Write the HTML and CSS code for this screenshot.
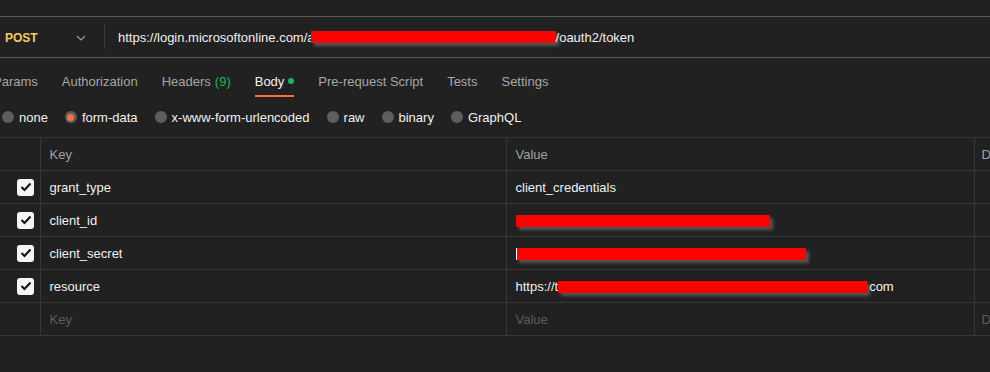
FILE: index.html
```html
<!DOCTYPE html>
<html lang="en">
<head>
<meta charset="UTF-8" />
<title>POST token request</title>
<link rel="stylesheet" href="styles.css">
</head>
<body>

<div class="top-strip"></div>

<div class="url-bar">
  <div class="method">
    <span class="method-name">POST</span>
    <svg class="chevron" width="10" height="6" viewBox="0 0 10 6"><polyline points="1,1 5,5 9,1" fill="none" stroke="#9a9a9a" stroke-width="1.2"/></svg>
  </div>
  <div class="divider"></div>
  <div class="url">https://login.microsoftonline.com/a<span class="redact redact-url"></span>/oauth2/token</div>
</div>

<div class="tabs">
  <div class="tab tab-params">Params</div>
  <div class="tab">Authorization</div>
  <div class="tab">Headers <span class="count">(9)</span></div>
  <div class="tab active">Body <span class="dot"></span></div>
  <div class="tab">Pre-request Script</div>
  <div class="tab">Tests</div>
  <div class="tab">Settings</div>
</div>

<div class="body-types">
  <label class="radio"><span class="circle"></span>none</label>
  <label class="radio"><span class="circle checked"></span>form-data</label>
  <label class="radio"><span class="circle"></span>x-www-form-urlencoded</label>
  <label class="radio"><span class="circle"></span>raw</label>
  <label class="radio"><span class="circle"></span>binary</label>
  <label class="radio"><span class="circle"></span>GraphQL</label>
</div>

<table class="kv">
  <colgroup>
    <col class="c-check"><col class="c-key"><col class="c-value"><col class="c-desc">
  </colgroup>
  <tr class="head">
    <td></td><td>Key</td><td>Value</td><td>D</td>
  </tr>
  <tr>
    <td><span class="checkbox"><svg width="12" height="10" viewBox="0 0 12 10"><polyline points="1.5,5 4.5,8 10.5,1.5" fill="none" stroke="#111" stroke-width="2"/></svg></span></td>
    <td>grant_type</td><td>client_credentials</td><td></td>
  </tr>
  <tr>
    <td><span class="checkbox"><svg width="12" height="10" viewBox="0 0 12 10"><polyline points="1.5,5 4.5,8 10.5,1.5" fill="none" stroke="#111" stroke-width="2"/></svg></span></td>
    <td>client_id</td><td><span class="redact redact-id"></span></td><td></td>
  </tr>
  <tr>
    <td><span class="checkbox"><svg width="12" height="10" viewBox="0 0 12 10"><polyline points="1.5,5 4.5,8 10.5,1.5" fill="none" stroke="#111" stroke-width="2"/></svg></span></td>
    <td>client_secret</td><td><span class="redact redact-secret"></span></td><td></td>
  </tr>
  <tr>
    <td><span class="checkbox"><svg width="12" height="10" viewBox="0 0 12 10"><polyline points="1.5,5 4.5,8 10.5,1.5" fill="none" stroke="#111" stroke-width="2"/></svg></span></td>
    <td>resource</td><td>https://t<span class="redact redact-res"></span>com</td><td></td>
  </tr>
  <tr class="placeholder">
    <td></td><td>Key</td><td>Value</td><td>D</td>
  </tr>
</table>

</body>
</html>
```

FILE: styles.css
```css
html, body {
  margin: 0;
  background: #212121;
  overflow: hidden;
}
body {
  font-family: "Liberation Sans", Arial, sans-serif;
  font-size: 13px;
  color: #f0f0f0;
  width: 990px;
  height: 372px;
}
.top-strip {
  height: 16px;
  border-bottom: 1px solid #5a5a5a;
}
.url-bar {
  display: flex;
  align-items: center;
  height: 40px;
  border-bottom: 1px solid #5a5a5a;
}
.method {
  width: 104px;
  box-sizing: border-box;
  padding: 1px 18px 0 5px;
  display: flex;
  align-items: center;
  justify-content: space-between;
}
.method-name {
  color: #f5cd5c;
  font-weight: bold;
  font-size: 12px;
}
.divider {
  width: 1px;
  height: 24px;
  background: #3d3d3d;
}
.url {
  padding-left: 13px;
  display: flex;
  align-items: center;
}
.redact {
  display: inline-block;
  height: 12px;
  background: #ff0000;
  box-shadow: 3px 3px 3px #555;
}
.redact-url {
  width: 245px;
  margin-left: -4px;
}
.redact-id {
  width: 254px;
  vertical-align: middle;
}
.redact-secret {
  width: 289px;
  vertical-align: middle;
  border-left: 1px solid #fff;
}
.redact-res {
  width: 309px;
  vertical-align: middle;
  margin-right: 2px;
}
.tabs {
  display: flex;
  gap: 24px;
  height: 39px;
  margin-left: -7px;
}
.tab {
  display: flex;
  align-items: center;
  box-sizing: border-box;
  padding-top: 9px;
  border-bottom: 2px solid transparent;
  color: #a6a6a6;
  white-space: nowrap;
}
.tab .count {
  color: #0cbb52;
  margin-left: 4px;
}
.tab.active {
  color: #f2f2f2;
  border-bottom-color: #ff6c37;
}
.dot {
  width: 6px;
  height: 6px;
  border-radius: 50%;
  background: #0cbb52;
  margin-left: 4px;
}
.body-types {
  display: flex;
  align-items: center;
  height: 40px;
  gap: 17px;
  padding-left: 2px;
}
.radio {
  display: flex;
  align-items: center;
  gap: 5px;
  color: #f0f0f0;
}
.circle {
  width: 12px;
  height: 12px;
  border-radius: 50%;
  background: #5e5e5e;
  display: flex;
  align-items: center;
  justify-content: center;
}
.circle.checked::after {
  content: "";
  width: 7px;
  height: 7px;
  border-radius: 50%;
  background: #ff6c37;
}
.kv {
  border-collapse: collapse;
  table-layout: fixed;
  width: 1034px;
}
.c-check { width: 40px; }
.c-key { width: 466px; }
.c-value { width: 468px; }
.c-desc { width: 60px; }
.kv td {
  height: 32px;
  padding: 0 0 0 9px;
  border-top: 1px solid #363636;
  border-bottom: 1px solid #363636;
  border-right: 1px solid #363636;
  white-space: nowrap;
  overflow: hidden;
}
.kv td:first-child {
  padding: 0 0 0 17px;
}
.kv td:last-child {
  border-right: none;
  padding-left: 7px;
}
.kv .head td {
  color: #a0a0a0;
}
.kv .placeholder td {
  color: #5c5c5c;
}
.checkbox {
  display: flex;
  align-items: center;
  justify-content: center;
  width: 17px;
  height: 17px;
  border-radius: 3px;
  background: #f5f5f5;
}
```
